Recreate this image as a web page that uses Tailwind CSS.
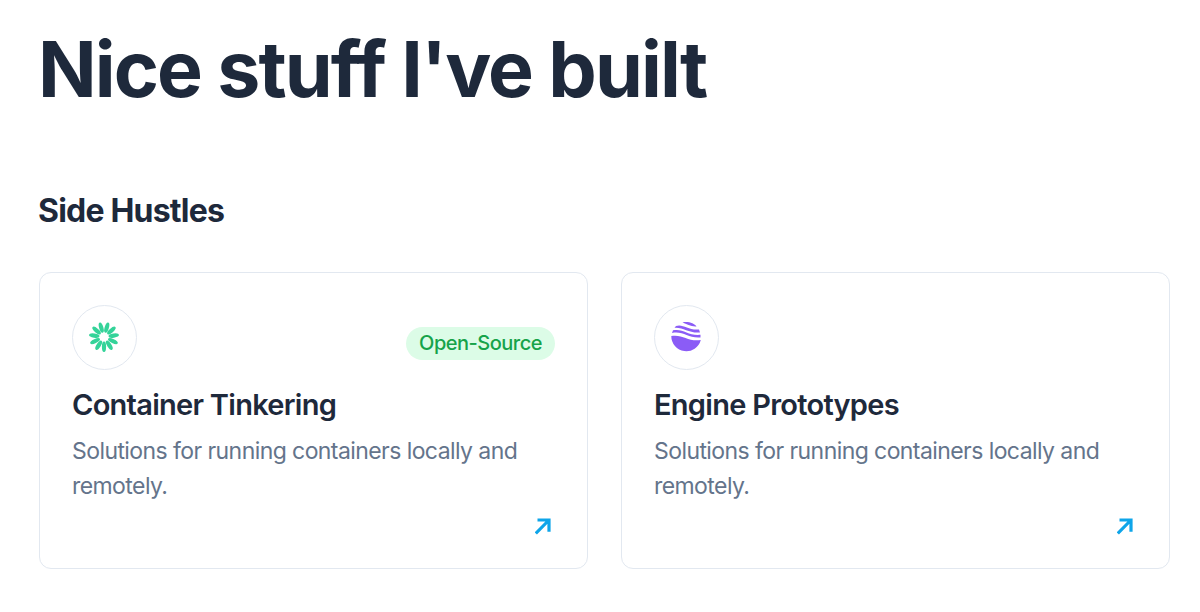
<!DOCTYPE html>
<html lang="en">
<head>
  <meta charset="UTF-8" />
  <meta name="viewport" content="width=device-width, initial-scale=1.0"/>
  <title>Nice stuff I've built</title>
  <script src="https://cdn.jsdelivr.net/npm/@tailwindcss/browser@4"></script>
</head>
<body class="bg-white font-['Inter',sans-serif] text-[#64748b]">

  <main class="pl-[38px] pr-[30px] pt-6 pb-10">
    <h1 class="text-[77px] leading-[90px] font-bold tracking-tight text-[#1e293b]">Nice stuff I've built</h1>

    <!-- Side Hustles -->
    <section class="mt-[76px]">
      <h2 class="text-[32px] leading-[42px] font-bold tracking-tight text-[#1e293b]">Side Hustles</h2>

      <div class="mt-10 ml-px grid grid-cols-2 gap-[33px]">
        <!-- Card -->
        <article class="flex flex-col rounded-xl border border-[#e2e8f0] p-8">
          <div class="flex items-center justify-between">
            <div class="flex size-[65px] items-center justify-center rounded-full border border-[#e2e8f0]">
              <svg class="size-8" viewBox="0 0 32 32" fill="#34d399" aria-hidden="true">
                <defs><ellipse id="petal" cx="15" cy="24.8" rx="2.1" ry="5.3" /></defs>
                <use href="#petal" />
                <use href="#petal" transform="rotate(32.7 15 15)" />
                <use href="#petal" transform="rotate(65.5 15 15)" />
                <use href="#petal" transform="rotate(98.2 15 15)" />
                <use href="#petal" transform="rotate(130.9 15 15)" />
                <use href="#petal" transform="rotate(163.6 15 15)" />
                <use href="#petal" transform="rotate(196.4 15 15)" />
                <use href="#petal" transform="rotate(229.1 15 15)" />
                <use href="#petal" transform="rotate(261.8 15 15)" />
                <use href="#petal" transform="rotate(294.5 15 15)" />
                <use href="#petal" transform="rotate(327.3 15 15)" />
              </svg>
            </div>
            <span class="mt-3 rounded-full bg-[#dcfce7] px-[13px] text-[20px] leading-[33px] font-medium tracking-tight text-[#16a34a]">Open-Source</span>
          </div>
          <h3 class="mt-4 text-[29px] leading-[38px] font-semibold tracking-tight text-[#1e293b]">Container Tinkering</h3>
          <p class="mt-[10px] text-[23px] leading-[35px] tracking-tight">Solutions for running containers locally and remotely.</p>
          <a href="#" class="mt-3 self-end text-[#0ea5e9]" aria-label="Open Container Tinkering">
            <svg class="size-5" viewBox="0 0 20 20" fill="none" stroke="currentColor" stroke-width="3.2" aria-hidden="true">
              <path d="M2.500 4H14V15.800M14 4L.8 17.500" />
            </svg>
          </a>
        </article>

        <!-- Card -->
        <article class="flex flex-col rounded-xl border border-[#e2e8f0] p-8">
          <div class="flex items-center justify-between">
            <div class="flex size-[65px] items-center justify-center rounded-full border border-[#e2e8f0]">
              <svg class="size-8" viewBox="0 0 32 32" fill="#8b5cf6" aria-hidden="true">
                <path d="M11.500 .5C17 -1 23.500 1.500 25.500 4.500C20 5 16 2 11.500 .5Z" />
                <path d="M5 4C12 1.500 17 8.500 28 7.500L29 10.500C18 11.500 12 5 3.500 5.800Z" />
                <path d="M2 8.300C12 6 17 14 29.500 12.800V15.500C17 16.500 12 8.500 1 11Z" />
                <path d="M.3 14C12 12 17 20 29.800 18A15 15 0 0 1 .3 14Z" />
              </svg>
            </div>
          </div>
          <h3 class="mt-4 text-[29px] leading-[38px] font-semibold tracking-tight text-[#1e293b]">Engine Prototypes</h3>
          <p class="mt-[10px] text-[23px] leading-[35px] tracking-tight">Solutions for running containers locally and remotely.</p>
          <a href="#" class="mt-3 self-end text-[#0ea5e9]" aria-label="Open Engine Prototypes">
            <svg class="size-5" viewBox="0 0 20 20" fill="none" stroke="currentColor" stroke-width="3.2" aria-hidden="true">
              <path d="M2.500 4H14V15.800M14 4L.8 17.500" />
            </svg>
          </a>
        </article>
      </div>
    </section>
  </main>

</body>
</html>
